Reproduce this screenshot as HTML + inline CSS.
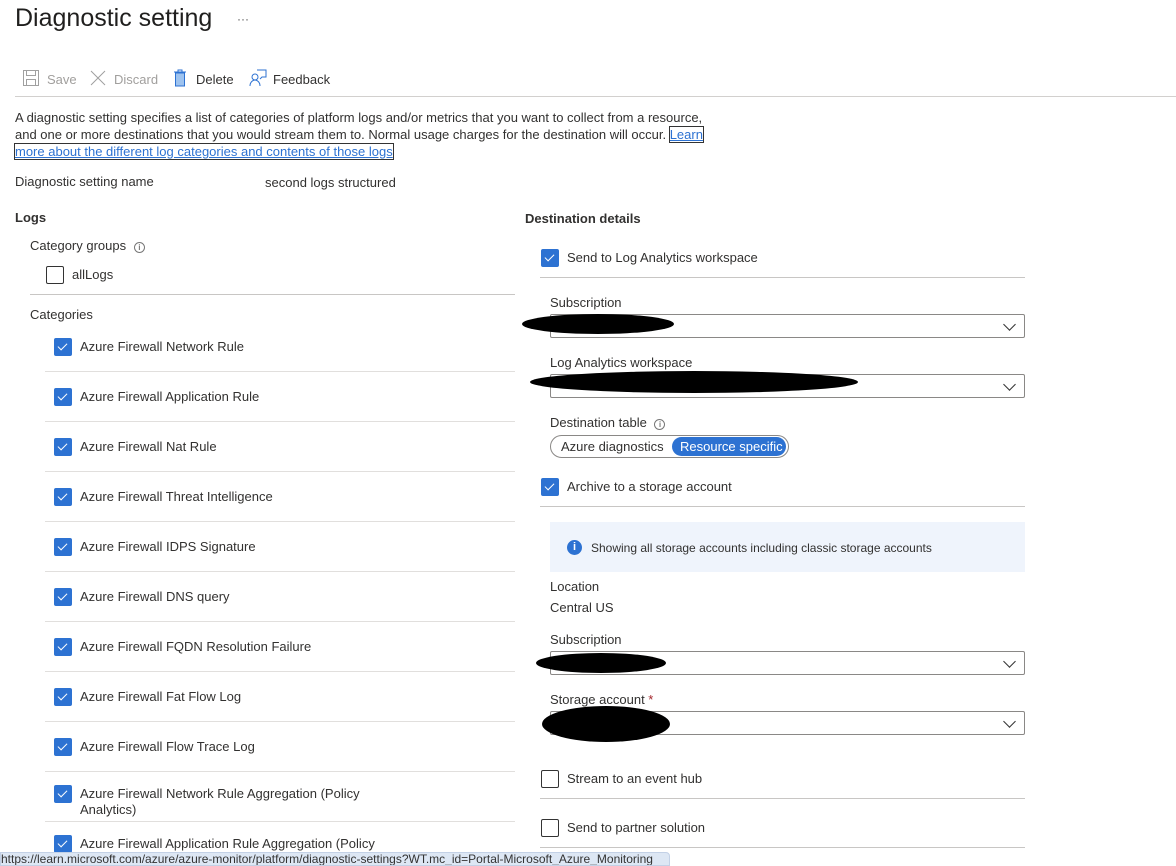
<!DOCTYPE html>
<html><head><style>
*{margin:0;padding:0;box-sizing:border-box}
body{width:1176px;height:864px;overflow:hidden;background:#fff;font-family:"Liberation Sans",sans-serif;font-size:13px;color:#323130;position:relative}
.a{position:absolute;white-space:nowrap}
.cb{position:absolute;width:18px;height:18px;background:#2d72d2;border-radius:2px}
.cb::after{content:"";position:absolute;left:6px;top:3px;width:4px;height:8px;border:solid #fff;border-width:0 1.2px 1.2px 0;transform:rotate(45deg)}
.ucb{position:absolute;width:18px;height:18px;border:1px solid #333;border-radius:2px;background:#fff}
.hr{position:absolute;height:1px;background:#e1dfdd}
.dd{position:absolute;left:550px;width:475px;height:24px;border:1px solid #8a8886;border-radius:2px}
.dd::after{content:"";position:absolute;right:10px;top:5px;width:8px;height:8px;border:solid #333;border-width:0 1.2px 1.2px 0;transform:rotate(45deg)}
.blk{position:absolute;background:#000;border-radius:50%}
</style></head><body>
<div class="a" style="left:15px;top:4px;font-size:25px;color:#201f1e;font-weight:500">Diagnostic setting</div>
<div class="a" style="left:237px;top:12px;font-size:12px;color:#555">···</div>
<svg class="a" style="left:22px;top:69px" width="18" height="18" viewBox="0 0 18 18" fill="none" stroke="#a0a0a0"><rect x="1.5" y="1.5" width="15" height="15"/><rect x="4.5" y="1.5" width="9" height="5"/><rect x="4.5" y="10.5" width="9" height="6"/></svg>
<div class="a" style="left:47px;top:72px;color:#a19f9d">Save</div>
<svg class="a" style="left:90px;top:70px" width="16" height="16" stroke="#a0a0a0"><path d="M1 1L15 15M15 1L1 15"/></svg>
<div class="a" style="left:114px;top:72px;color:#a19f9d">Discard</div>
<svg class="a" style="left:173px;top:69px" width="14" height="18" fill="none" stroke="#2d72d2"><path d="M1 3h12M5 3V1h4v2"/><rect x="2.5" y="4" width="9" height="13" fill="#9ec3ef"/></svg>
<div class="a" style="left:196px;top:72px">Delete</div>
<svg class="a" style="left:249px;top:69px" width="18" height="18" fill="none" stroke="#2d72d2"><circle cx="6" cy="8" r="3"/><path d="M1 17c0-4 3-6 5-6s5 2 5 6M8 1h9v7h-4l-2 2"/></svg>
<div class="a" style="left:273px;top:72px">Feedback</div>
<div class="hr" style="left:15px;top:96px;width:1161px;background:#d2d0ce"></div>
<div class="a" style="left:15px;top:109px;line-height:17px;white-space:normal;width:720px">A diagnostic setting specifies a list of categories of platform logs and/or metrics that you want to collect from a resource,<br>and one or more destinations that you would stream them to. Normal usage charges for the destination will occur. <span style="color:#2d72d2;text-decoration:underline;outline:1px solid #333">Learn</span><br><span style="color:#2d72d2;text-decoration:underline;outline:1px solid #333">more about the different log categories and contents of those logs</span></div>
<div class="a" style="left:15px;top:174px">Diagnostic setting name</div>
<div class="a" style="left:265px;top:175px">second logs structured</div>
<div class="a" style="left:15px;top:210px;font-weight:bold">Logs</div>
<div class="a" style="left:30px;top:238px">Category groups <span style="display:inline-block;width:11px;height:11px;border:1px solid #777;border-radius:50%;font-size:8px;text-align:center;line-height:9px;margin-left:4px">i</span></div>
<div class="ucb" style="left:46px;top:266px"></div>
<div class="a" style="left:72px;top:267px">allLogs</div>
<div class="hr" style="left:30px;top:294px;width:485px;background:#c8c6c4"></div>
<div class="a" style="left:30px;top:307px">Categories</div>

<div class="cb" style="left:54px;top:338px"></div><div class="a" style="left:80px;top:339px">Azure Firewall Network Rule</div><div class="hr" style="left:45px;top:371px;width:470px"></div>
<div class="cb" style="left:54px;top:388px"></div><div class="a" style="left:80px;top:389px">Azure Firewall Application Rule</div><div class="hr" style="left:45px;top:421px;width:470px"></div>
<div class="cb" style="left:54px;top:438px"></div><div class="a" style="left:80px;top:439px">Azure Firewall Nat Rule</div><div class="hr" style="left:45px;top:471px;width:470px"></div>
<div class="cb" style="left:54px;top:488px"></div><div class="a" style="left:80px;top:489px">Azure Firewall Threat Intelligence</div><div class="hr" style="left:45px;top:521px;width:470px"></div>
<div class="cb" style="left:54px;top:538px"></div><div class="a" style="left:80px;top:539px">Azure Firewall IDPS Signature</div><div class="hr" style="left:45px;top:571px;width:470px"></div>
<div class="cb" style="left:54px;top:588px"></div><div class="a" style="left:80px;top:589px">Azure Firewall DNS query</div><div class="hr" style="left:45px;top:621px;width:470px"></div>
<div class="cb" style="left:54px;top:638px"></div><div class="a" style="left:80px;top:639px">Azure Firewall FQDN Resolution Failure</div><div class="hr" style="left:45px;top:671px;width:470px"></div>
<div class="cb" style="left:54px;top:688px"></div><div class="a" style="left:80px;top:689px">Azure Firewall Fat Flow Log</div><div class="hr" style="left:45px;top:721px;width:470px"></div>
<div class="cb" style="left:54px;top:738px"></div><div class="a" style="left:80px;top:739px">Azure Firewall Flow Trace Log</div><div class="hr" style="left:45px;top:771px;width:470px"></div>
<div class="cb" style="left:54px;top:785px"></div><div class="a" style="left:80px;top:786px;line-height:16px">Azure Firewall Network Rule Aggregation (Policy<br>Analytics)</div><div class="hr" style="left:45px;top:821px;width:470px"></div>
<div class="cb" style="left:54px;top:835px"></div><div class="a" style="left:80px;top:836px">Azure Firewall Application Rule Aggregation (Policy</div>

<div class="a" style="left:525px;top:211px;font-weight:bold">Destination details</div>
<div class="cb" style="left:541px;top:249px"></div><div class="a" style="left:567px;top:250px">Send to Log Analytics workspace</div>
<div class="hr" style="left:540px;top:277px;width:485px;background:#c8c6c4"></div>
<div class="a" style="left:550px;top:295px">Subscription</div>
<div class="dd" style="top:314px"></div>
<div class="blk" style="left:522px;top:314px;width:152px;height:20px"></div>
<div class="a" style="left:550px;top:355px">Log Analytics workspace</div>
<div class="dd" style="top:374px"></div>
<div class="blk" style="left:530px;top:371px;width:328px;height:22px"></div>
<div class="a" style="left:550px;top:415px">Destination table <span style="display:inline-block;width:11px;height:11px;border:1px solid #777;border-radius:50%;font-size:8px;text-align:center;line-height:9px;margin-left:4px">i</span></div>
<div class="a" style="left:550px;top:435px;width:239px;height:23px;border:1px solid #8a8886;border-radius:12px"></div>
<div class="a" style="left:561px;top:439px">Azure diagnostics</div>
<div class="a" style="left:672px;top:437px;width:114px;height:19px;background:#2d72d2;border-radius:10px;color:#fff;padding:2px 0 0 8px">Resource specific</div>
<div class="cb" style="left:541px;top:478px"></div><div class="a" style="left:567px;top:479px">Archive to a storage account</div>
<div class="hr" style="left:540px;top:506px;width:485px;background:#c8c6c4"></div>
<div class="a" style="left:550px;top:522px;width:475px;height:50px;background:#eff4fc"></div>
<div class="a" style="left:567px;top:540px;width:15px;height:15px;border-radius:50%;background:#2d72d2;color:#fff;font-size:11px;font-weight:bold;text-align:center;line-height:15px">i</div>
<div class="a" style="left:591px;top:541px;font-size:12px">Showing all storage accounts including classic storage accounts</div>
<div class="a" style="left:550px;top:579px">Location</div>
<div class="a" style="left:550px;top:600px">Central US</div>
<div class="a" style="left:550px;top:632px">Subscription</div>
<div class="dd" style="top:651px"></div>
<div class="blk" style="left:536px;top:653px;width:130px;height:20px"></div>
<div class="a" style="left:550px;top:692px">Storage account <span style="color:#a4262c">*</span></div>
<div class="dd" style="top:711px"></div>
<div class="blk" style="left:542px;top:706px;width:128px;height:36px"></div>
<div class="ucb" style="left:541px;top:770px"></div><div class="a" style="left:567px;top:771px">Stream to an event hub</div>
<div class="hr" style="left:540px;top:798px;width:485px;background:#c8c6c4"></div>
<div class="ucb" style="left:541px;top:819px"></div><div class="a" style="left:567px;top:820px">Send to partner solution</div>
<div class="hr" style="left:540px;top:847px;width:485px;background:#c8c6c4"></div>
<div class="a" style="left:0;top:852px;width:670px;height:14px;background:#dde7f4;border:1px solid #c3d1e6;border-radius:0 4px 0 0;font-size:12px;line-height:13px;overflow:hidden;color:#333">https://learn.microsoft.com/azure/azure-monitor/platform/diagnostic-settings?WT.mc_id=Portal-Microsoft_Azure_Monitoring</div>
</body></html>
